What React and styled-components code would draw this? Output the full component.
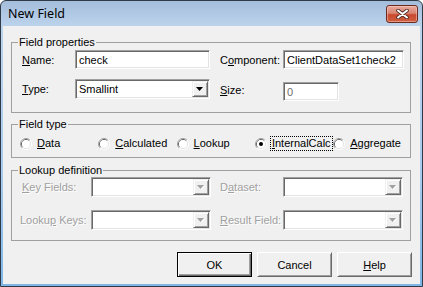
import React from "react";
import styled, { createGlobalStyle } from "styled-components";

const GlobalStyle = createGlobalStyle`
  html, body { margin: 0; padding: 0; }
  body {
    width: 423px; height: 287px; overflow: hidden; background: #fff;
    font-family: "Liberation Sans", Arial, sans-serif; font-size: 11px; color: #000;
  }
  * { box-sizing: border-box; }
`;

const Window = styled.div`
  width: 423px;
  height: 287px;
  display: flex;
  flex-direction: column;
  border: 1px solid #2e3a48;
  border-radius: 6px 6px 0 0;
  background: linear-gradient(to bottom, #a3bddb 0px, #bcd3ec 25px, #a9cbee 60%, #7fb6e6 100%);
  padding: 0 2px 2px 2px;
`;

const TitleBar = styled.div`
  height: 25px;
  display: flex;
  align-items: flex-start;
  justify-content: space-between;
  padding: 0 2px 0 5px;
  flex: none;
`;

const Title = styled.span`
  font-family: "Noto Sans", "Open Sans", sans-serif;
  font-size: 12.5px;
  line-height: 26px;
  color: #000;
`;

const CloseButton = styled.div`
  margin-top: 4px;
  width: 32px;
  height: 18px;
  border: 1px solid #6a2a1f;
  border-radius: 3px;
  background: linear-gradient(to bottom, #e9aa9c 0%, #d98472 45%, #c9492f 55%, #d0603f 100%);
  box-shadow: inset 0 0 0 1px rgba(255, 220, 210, 0.45);
  display: flex;
  align-items: center;
  justify-content: center;
`;

const Client = styled.div`
  flex: 1;
  background: #f0f0f0;
  display: flex;
  flex-direction: column;
  padding: 9px 9px 0 8px;
`;

const Group = styled.fieldset`
  margin: ${(p) => p.$mt || 0}px 0 0 0;
  padding: 0;
  border: 1px solid #a0a0a0;
  min-width: 0;
`;

const Legend = styled.legend`
  margin-left: 6px;
  padding: 0 1px;
  font-size: 11px;
  line-height: 14px;
  color: #000;
`;

const PropGrid = styled.div`
  display: grid;
  grid-template-columns: 53px 145px 63px 1fr;
  grid-template-rows: 19px 20px;
  row-gap: 10px;
  padding: 1px 0 13px 10px;
`;

const LookupGrid = styled.div`
  display: grid;
  grid-template-columns: 69px 129px 63px 1fr;
  grid-template-rows: 20px 20px;
  row-gap: 13px;
  padding: 0 0 10px 10px;
`;

const Label = styled.label`
  display: flex;
  align-items: center;
  white-space: nowrap;
  color: ${(p) => (p.$disabled ? "#a0a0a0" : "#000")};
  text-shadow: ${(p) => (p.$disabled ? "1px 1px 0 #fff" : "none")};
  margin-top: ${(p) => p.$mt || 0}px;
  margin-left: ${(p) => p.$ml || 0}px;
`;

const U = styled.span`
  text-decoration: underline;
  text-underline-offset: 1px;
`;

const sunken = `
  border: 1px solid;
  border-color: #a0a0a0 #ffffff #ffffff #a0a0a0;
  box-shadow: inset 1px 1px 0 #696969, inset -1px -1px 0 #e3e3e3;
`;

const TextInput = styled.div`
  ${sunken}
  width: ${(p) => p.$w}px;
  height: 19px;
  margin-top: ${(p) => p.$mt || 0}px;
  background: #fff;
  padding: 0 3px;
  display: flex;
  align-items: center;
  white-space: nowrap;
  overflow: hidden;
  color: ${(p) => (p.$dim ? "#6d6d6d" : "#000")};
`;

const Combo = styled.div`
  ${sunken}
  width: ${(p) => p.$w}px;
  height: 20px;
  background: #fff;
  padding: 1px;
  display: flex;
`;

const ComboText = styled.div`
  flex: 1;
  display: flex;
  align-items: center;
  padding-left: 2px;
  white-space: nowrap;
`;

const DropButton = styled.div`
  width: 16px;
  height: 16px;
  background: #f0f0f0;
  border: 1px solid;
  border-color: #f0f0f0 #696969 #696969 #f0f0f0;
  box-shadow: inset 1px 1px 0 #fff, inset -1px -1px 0 #a0a0a0;
  display: flex;
  align-items: center;
  justify-content: center;
`;

const RadioRow = styled.div`
  display: grid;
  grid-template-columns: repeat(4, 78.3px) auto;
  padding: 5px 0 6px 8px;
`;

const RadioItem = styled.div`
  display: flex;
  align-items: center;
  height: 15px;
`;

const RadioCaption = styled.span`
  margin-left: 3px;
  padding: 0 1px;
  line-height: 13px;
  border: 1px dotted ${(p) => (p.$focus ? "#000" : "transparent")};
  white-space: nowrap;
`;

const ButtonRow = styled.div`
  display: flex;
  justify-content: flex-end;
  gap: 5px;
  margin-top: 11px;
  margin-right: -1px;
`;

const Button = styled.div`
  width: 75px;
  height: 25px;
  background: #f0f0f0;
  display: flex;
  align-items: center;
  justify-content: center;
  border: 1px solid;
  border-color: ${(p) => (p.$default ? "#000" : "#fff #696969 #696969 #fff")};
  box-shadow: ${(p) =>
    p.$default
      ? "inset 1px 1px 0 #fff, inset -1px -1px 0 #696969, inset -2px -2px 0 #a0a0a0"
      : "inset 1px 1px 0 #f0f0f0, inset -1px -1px 0 #a0a0a0"};
`;

const Radio = ({ checked }) => (
  <svg width="12" height="12" viewBox="0 0 12 12" style={{ flex: "none" }}>
    <path d="M2.11 9.89 A5.5 5.5 0 0 1 9.89 2.11" fill="none" stroke="#a0a0a0" strokeWidth="1" />
    <path d="M9.89 2.11 A5.5 5.5 0 0 1 2.11 9.89" fill="none" stroke="#ffffff" strokeWidth="1" />
    <path d="M2.82 9.18 A4.5 4.5 0 0 1 9.18 2.82" fill="none" stroke="#696969" strokeWidth="1" />
    <path d="M9.18 2.82 A4.5 4.5 0 0 1 2.82 9.18" fill="none" stroke="#e3e3e3" strokeWidth="1" />
    <circle cx="6" cy="6" r="4" fill="#fff" />
    {checked && <circle cx="6" cy="6" r="2" fill="#000" />}
  </svg>
);

const Arrow = ({ disabled }) => (
  <svg width="8" height="5" viewBox="0 0 8 5">
    {disabled && <path d="M1 1 H8 L4.5 4.5 Z" fill="#fff" />}
    <path d="M0 0 H7 L3.5 4 Z" fill={disabled ? "#a0a0a0" : "#000"} />
  </svg>
);

const CloseGlyph = () => (
  <svg width="13" height="10" viewBox="0 0 13 10">
    <path d="M2 1.5 L11 8.5 M11 1.5 L2 8.5" stroke="#4a2a24" strokeWidth="3.6" strokeLinecap="round" />
    <path d="M2 1.5 L11 8.5 M11 1.5 L2 8.5" stroke="#ffffff" strokeWidth="2" strokeLinecap="round" />
  </svg>
);

export default function App() {
  return (
    <>
      <GlobalStyle />
      <Window>
        <TitleBar>
          <Title>New Field</Title>
          <CloseButton>
            <CloseGlyph />
          </CloseButton>
        </TitleBar>
        <Client>
          <Group>
            <Legend>Field properties</Legend>
            <PropGrid>
              <Label><span><U>N</U>ame:</span></Label>
              <TextInput $w={135}>check</TextInput>
              <Label><span>C<U>o</U>mponent:</span></Label>
              <TextInput $w={121}>ClientDataSet1check2</TextInput>
              <Label><span><U>T</U>ype:</span></Label>
              <Combo $w={135}>
                <ComboText>Smallint</ComboText>
                <DropButton><Arrow /></DropButton>
              </Combo>
              <Label $mt={2}><span><U>S</U>ize:</span></Label>
              <TextInput $w={56} $mt={3} $dim>0</TextInput>
            </PropGrid>
          </Group>

          <Group $mt={4}>
            <Legend>Field type</Legend>
            <RadioRow>
              <RadioItem><Radio /><RadioCaption><U>D</U>ata</RadioCaption></RadioItem>
              <RadioItem><Radio /><RadioCaption><U>C</U>alculated</RadioCaption></RadioItem>
              <RadioItem><Radio /><RadioCaption><U>L</U>ookup</RadioCaption></RadioItem>
              <RadioItem><Radio checked /><RadioCaption $focus><U>I</U>nternalCalc</RadioCaption></RadioItem>
              <RadioItem><Radio /><RadioCaption><U>A</U>ggregate</RadioCaption></RadioItem>
            </RadioRow>
          </Group>

          <Group $mt={5}>
            <Legend>Lookup definition</Legend>
            <LookupGrid>
              <Label $disabled><span><U>K</U>ey Fields:</span></Label>
              <Combo $w={120}>
                <ComboText />
                <DropButton><Arrow disabled /></DropButton>
              </Combo>
              <Label $disabled><span>D<U>a</U>taset:</span></Label>
              <Combo $w={120}>
                <ComboText />
                <DropButton><Arrow disabled /></DropButton>
              </Combo>
              <Label $disabled $ml={-2}><span>Looku<U>p</U> Keys:</span></Label>
              <Combo $w={120}>
                <ComboText />
                <DropButton><Arrow disabled /></DropButton>
              </Combo>
              <Label $disabled><span><U>R</U>esult Field:</span></Label>
              <Combo $w={120}>
                <ComboText />
                <DropButton><Arrow disabled /></DropButton>
              </Combo>
            </LookupGrid>
          </Group>

          <ButtonRow>
            <Button $default>OK</Button>
            <Button>Cancel</Button>
            <Button><span><U>H</U>elp</span></Button>
          </ButtonRow>
        </Client>
      </Window>
    </>
  );
}
